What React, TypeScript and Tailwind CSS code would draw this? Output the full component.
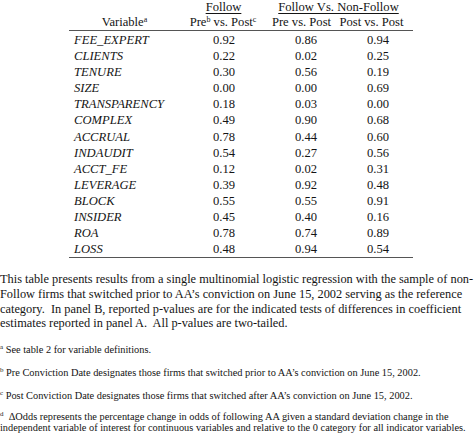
const rows: [string, string, string, string][] = [
  ['FEE_EXPERT', '0.92', '0.86', '0.94'],
  ['CLIENTS', '0.22', '0.02', '0.25'],
  ['TENURE', '0.30', '0.56', '0.19'],
  ['SIZE', '0.00', '0.00', '0.69'],
  ['TRANSPARENCY', '0.18', '0.03', '0.00'],
  ['COMPLEX', '0.49', '0.90', '0.68'],
  ['ACCRUAL', '0.78', '0.44', '0.60'],
  ['INDAUDIT', '0.54', '0.27', '0.56'],
  ['ACCT_FE', '0.12', '0.02', '0.31'],
  ['LEVERAGE', '0.39', '0.92', '0.48'],
  ['BLOCK', '0.55', '0.55', '0.91'],
  ['INSIDER', '0.45', '0.40', '0.16'],
  ['ROA', '0.78', '0.74', '0.89'],
  ['LOSS', '0.48', '0.94', '0.54'],
];

const cols = 'grid grid-cols-[110px_88px_69px_77px]';

export default function App() {
  return (
    <div className="w-[474px] h-[438px] overflow-hidden bg-white text-[#141414] font-['Liberation_Serif','Times_New_Roman',serif]">
      {/* Table */}
      <div className="ml-[69px] w-[344px] text-[12.6px]">
        <div className={`${cols} leading-[14px] h-[14px]`}>
          <div />
          <div className="text-center pl-[1px]">
            <span className="underline underline-offset-[2px] decoration-[1px]">Follow</span>
          </div>
          <div className="col-span-2 text-center pr-[3px]">
            <span className="underline underline-offset-[2px] decoration-[1px]">Follow Vs. Non-Follow</span>
          </div>
        </div>
        <div className={`${cols} mt-px leading-[15px] h-[16px] border-b border-[#555]`}>
          <div className="text-center pl-[1px]">
            Variable<sup className="text-[8px]">a</sup>
          </div>
          <div className="text-center">
            Pre<sup className="text-[8px]">b</sup> vs. Post<sup className="text-[8px]">c</sup>
          </div>
          <div className="text-center">Pre vs. Post</div>
          <div className="text-center pr-[6px]">Post vs. Post</div>
        </div>
        <div className="pt-px border-b border-[#555]">
          {rows.map(([name, a, b, c]) => (
            <div key={name} className={`${cols} leading-[16.1px]`}>
              <div className="italic pl-[5px]">{name}</div>
              <div className="text-center pl-[2px]">{a}</div>
              <div className="text-center pl-[9px]">{b}</div>
              <div className="text-center pl-[7px]">{c}</div>
            </div>
          ))}
        </div>
      </div>

      {/* Description */}
      <p className="mt-[14px] text-[12.35px] leading-[14.6px] whitespace-pre">
        This table presents results from a single multinomial logistic regression with the sample of non-
        <br />
        Follow firms that switched prior to AA’s conviction on June 15, 2002 serving as the reference
        <br />
        {'category.  In panel B, reported p-values are for the indicated tests of differences in coefficient'}
        <br />
        {'estimates reported in panel A.  All p-values are two-tailed.'}
      </p>

      {/* Footnotes */}
      <div className="mt-[13px] text-[10.35px] leading-[11px] whitespace-pre">
        <p>
          <sup className="text-[7px]">a</sup> See table 2 for variable definitions.
        </p>
        <p className="mt-[12px]">
          <sup className="text-[7px]">b</sup> Pre Conviction Date designates those firms that switched prior to AA’s conviction on June 15, 2002.
        </p>
        <p className="mt-[12px]">
          <sup className="text-[7px]">c</sup> Post Conviction Date designates those firms that switched after AA’s conviction on June 15, 2002.
        </p>
        <p className="mt-[10px]">
          <sup className="text-[7px]">d</sup>
          {'  ΔOdds represents the percentage change in odds of following AA given a standard deviation change in the'}
          <br />
          independent variable of interest for continuous variables and relative to the 0 category for all indicator variables.
        </p>
      </div>
    </div>
  );
}
